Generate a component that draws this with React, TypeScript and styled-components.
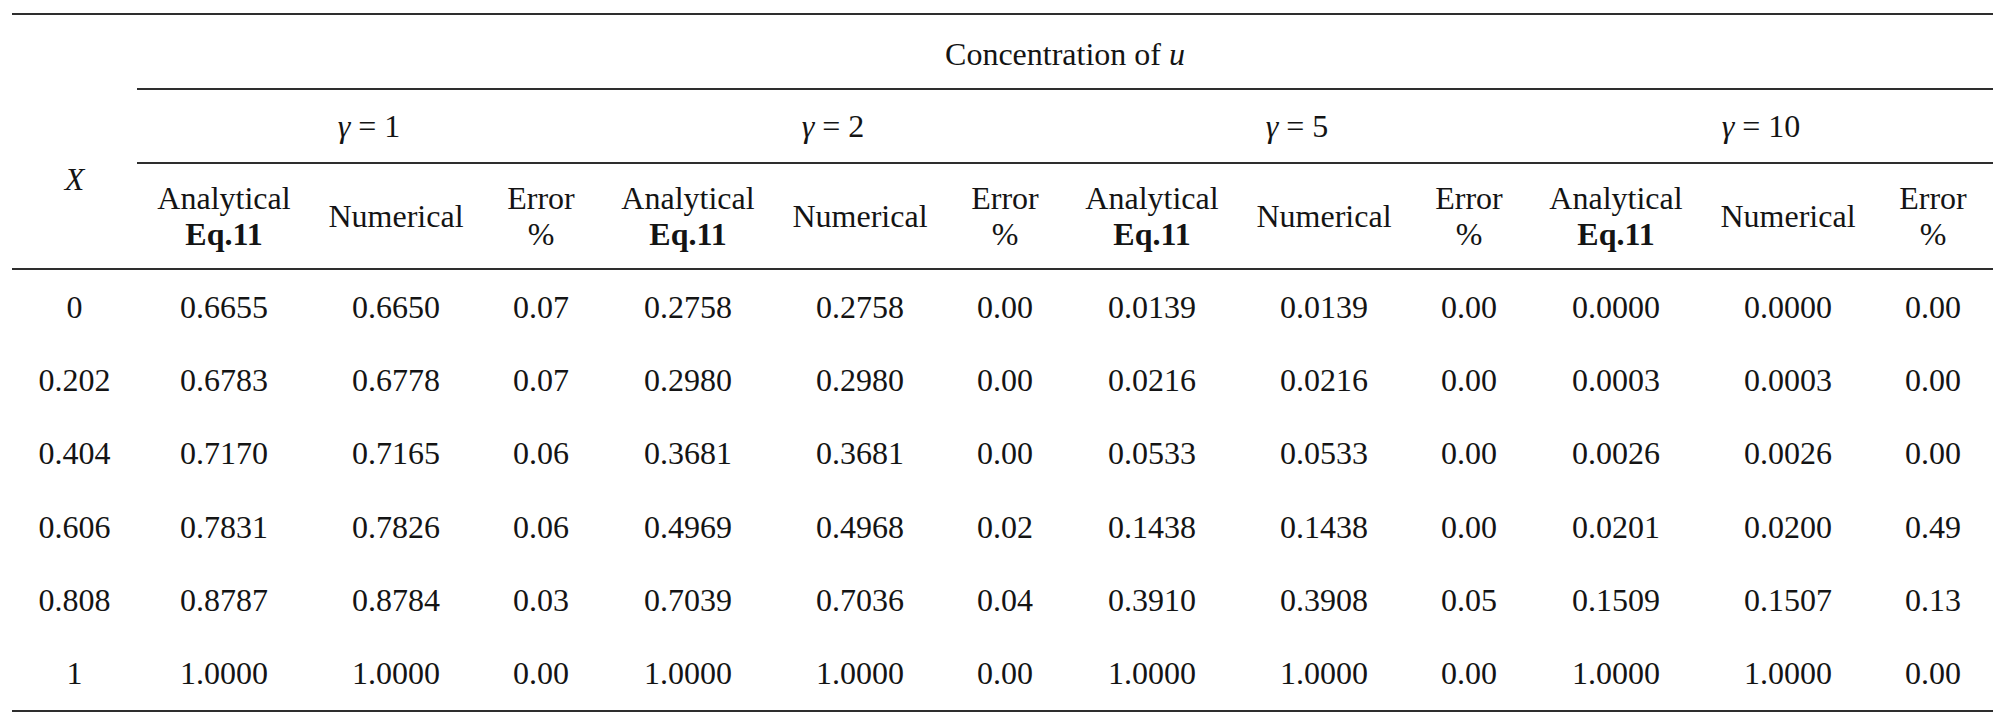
import React from 'react';
import styled, { createGlobalStyle } from 'styled-components';

const GlobalStyle = createGlobalStyle`
  html, body {
    margin: 0;
    padding: 0;
    background: #ffffff;
  }
  body {
    font-family: "Liberation Serif", "Times New Roman", serif;
    color: #141414;
  }
`;

const Page = styled.div`
  width: 2002px;
  height: 718px;
  padding: 13px 0 0 12px;
  box-sizing: border-box;
  background: #ffffff;
`;

const Grid = styled.div`
  display: grid;
  width: 1981px;
  grid-template-columns: 125px repeat(4, 174px 170px 120px);
  grid-template-rows: 75px 74px 106px repeat(6, 73.3px);
  border-top: 2px solid #2e2e2e;
  border-bottom: 2px solid #2e2e2e;
  font-size: 32px;
  line-height: 36px;
`;

const Cell = styled.div<{ $rule?: boolean }>`
  display: flex;
  flex-direction: column;
  align-items: center;
  justify-content: center;
  text-align: center;
  box-sizing: border-box;
  border-bottom: ${({ $rule }) => ($rule ? '2px solid #2e2e2e' : 'none')};
`;

const TitleCell = styled(Cell)`
  grid-column: 2 / span 12;
  padding-top: 4px;
`;

const GammaCell = styled(Cell)`
  grid-column: span 3;
`;

const XCell = styled(Cell)`
  grid-column: 1;
  grid-row: 2 / span 2;
  font-style: italic;
`;

const Bold = styled.span`
  font-weight: bold;
`;

const Ital = styled.span`
  font-style: italic;
`;

const gammas = ['1', '2', '5', '10'];

const rows: string[][] = [
  ['0', '0.6655', '0.6650', '0.07', '0.2758', '0.2758', '0.00', '0.0139', '0.0139', '0.00', '0.0000', '0.0000', '0.00'],
  ['0.202', '0.6783', '0.6778', '0.07', '0.2980', '0.2980', '0.00', '0.0216', '0.0216', '0.00', '0.0003', '0.0003', '0.00'],
  ['0.404', '0.7170', '0.7165', '0.06', '0.3681', '0.3681', '0.00', '0.0533', '0.0533', '0.00', '0.0026', '0.0026', '0.00'],
  ['0.606', '0.7831', '0.7826', '0.06', '0.4969', '0.4968', '0.02', '0.1438', '0.1438', '0.00', '0.0201', '0.0200', '0.49'],
  ['0.808', '0.8787', '0.8784', '0.03', '0.7039', '0.7036', '0.04', '0.3910', '0.3908', '0.05', '0.1509', '0.1507', '0.13'],
  ['1', '1.0000', '1.0000', '0.00', '1.0000', '1.0000', '0.00', '1.0000', '1.0000', '0.00', '1.0000', '1.0000', '0.00'],
];

const App: React.FC = () => {
  return (
    <Page>
      <GlobalStyle />
      <Grid>
        <Cell />
        <TitleCell $rule>
          <div>
            Concentration of <Ital>u</Ital>
          </div>
        </TitleCell>

        <XCell $rule>X</XCell>
        {gammas.map(g => (
          <GammaCell key={g} $rule>
            <div>
              <Ital>γ</Ital> = {g}
            </div>
          </GammaCell>
        ))}

        {gammas.map(g => (
          <React.Fragment key={'h' + g}>
            <Cell $rule>
              <div>Analytical</div>
              <Bold>Eq.11</Bold>
            </Cell>
            <Cell $rule>Numerical</Cell>
            <Cell $rule>
              <div>Error</div>
              <div>%</div>
            </Cell>
          </React.Fragment>
        ))}

        {rows.map((row, r) =>
          row.map((v, c) => <Cell key={r + '-' + c}>{v}</Cell>)
        )}
      </Grid>
    </Page>
  );
};

export default App;
